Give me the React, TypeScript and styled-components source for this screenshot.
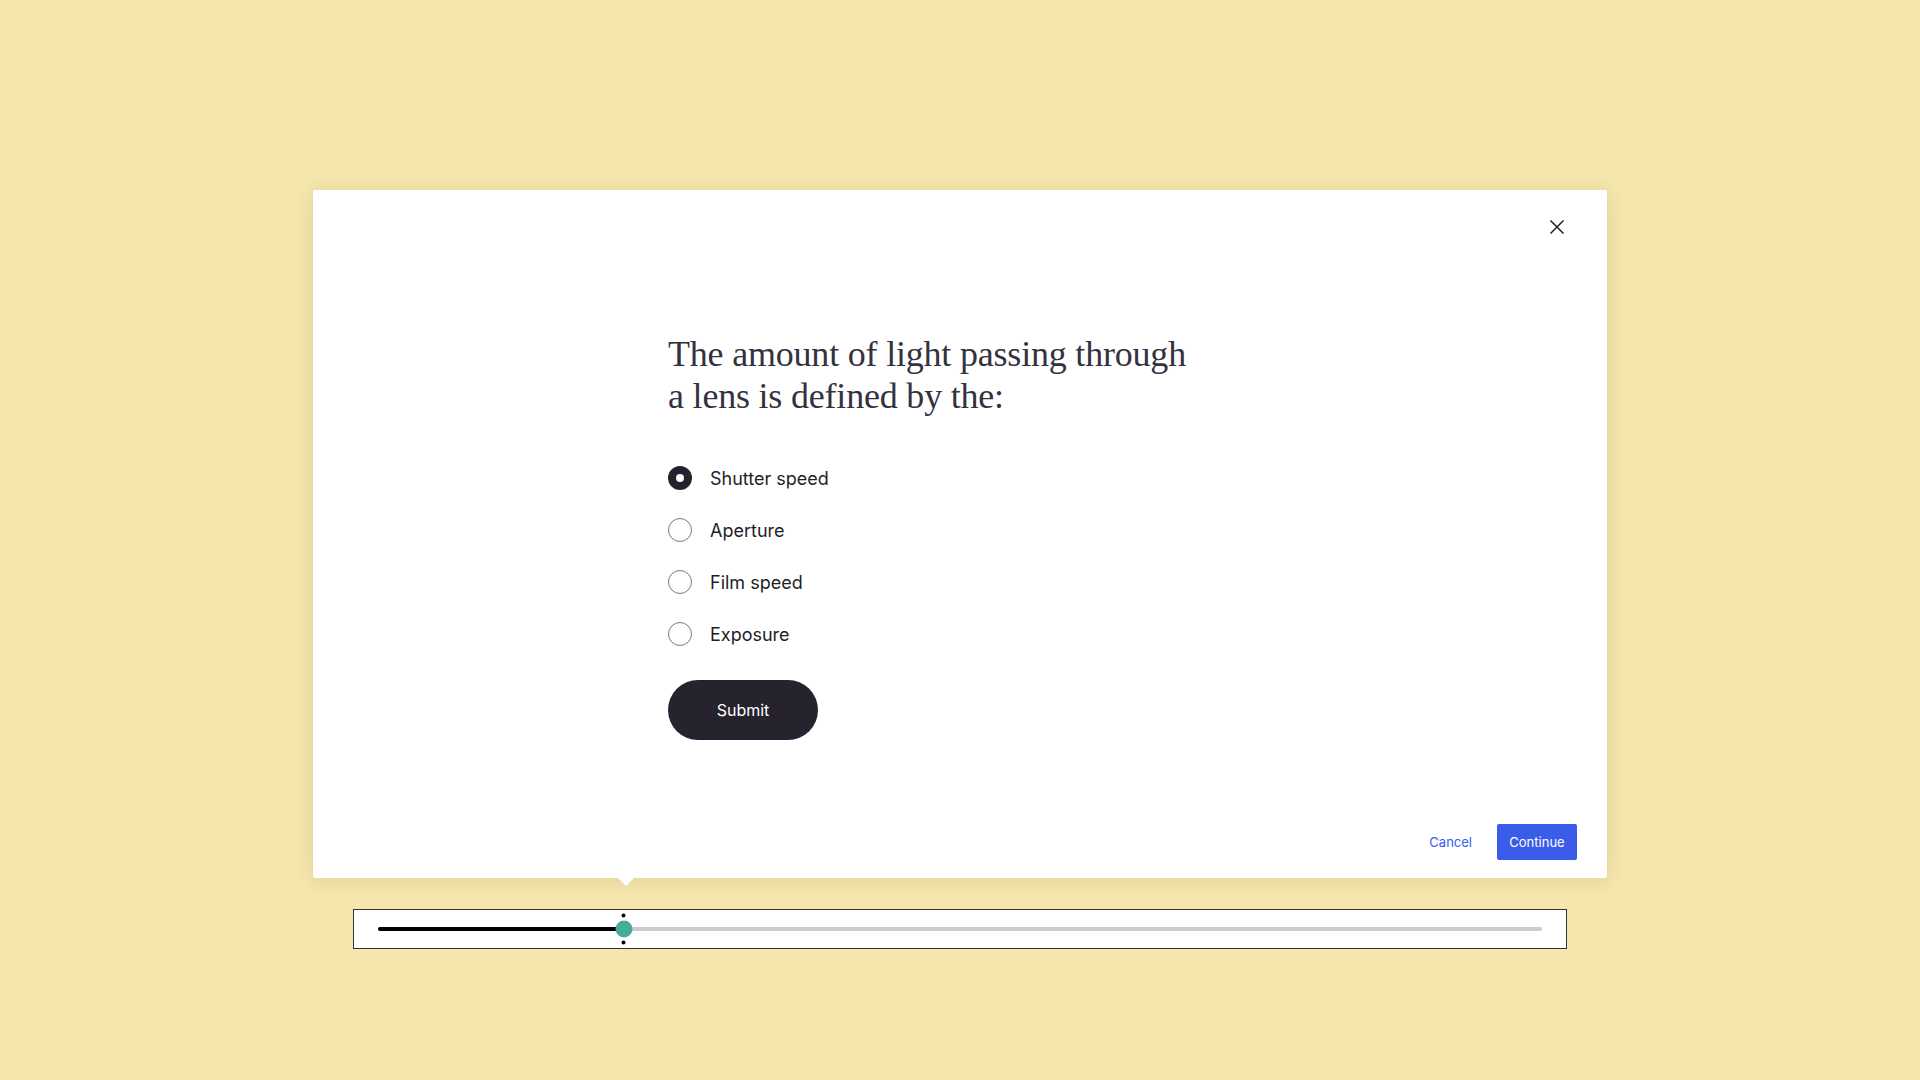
import styled, { createGlobalStyle } from "styled-components";

const GlobalStyle = createGlobalStyle`
  html, body {
    margin: 0;
    padding: 0;
    background: #f5e6ae;
  }
  body {
    font-family: Inter, "Noto Sans", sans-serif;
    color: #221f2c;
  }
`;

const options = ["Shutter speed", "Aperture", "Film speed", "Exposure"];
const progress = 0.211;

export default function App() {
  return (
    <>
      <GlobalStyle />
      <Page>
        <Modal>
          <CloseButton aria-label="Close">
            <svg width="16" height="16" viewBox="0 0 16 16" fill="none">
              <path d="M1.5 1.5L14.5 14.5M14.5 1.5L1.5 14.5" stroke="#222" strokeWidth="1.5" />
            </svg>
          </CloseButton>
          <Body>
            <Question>The amount of light passing through a lens is defined by the:</Question>
            <Options>
              {options.map((label, i) => (
                <Option key={label}>
                  <Radio $checked={i === 0} />
                  <span>{label}</span>
                </Option>
              ))}
            </Options>
            <SubmitButton>Submit</SubmitButton>
          </Body>
          <Footer>
            <LinkButton>Cancel</LinkButton>
            <PrimaryButton>Continue</PrimaryButton>
          </Footer>
        </Modal>
        <Scrubber>
          <Track>
            <Fill style={{ width: `${progress * 100}%` }} />
            <Thumb style={{ left: `${progress * 100}%` }} />
          </Track>
        </Scrubber>
      </Page>
    </>
  );
}

const Page = styled.main`
  min-height: 100vh;
  box-sizing: border-box;
  padding-top: 190px;
  display: flex;
  flex-direction: column;
  align-items: center;
`;

const Modal = styled.section`
  position: relative;
  width: 1294px;
  height: 688px;
  box-sizing: border-box;
  background: #fff;
  border-radius: 2px;
  box-shadow: 0 2px 18px rgba(90, 70, 20, 0.14);
  display: flex;
  flex-direction: column;

  /* pointer down to the scrubber position */
  &::after {
    content: "";
    position: absolute;
    left: 305px;
    bottom: -8px;
    border-left: 8px solid transparent;
    border-right: 8px solid transparent;
    border-top: 8px solid #fff;
  }
`;

const CloseButton = styled.button`
  position: absolute;
  top: 29px;
  right: 42px;
  width: 16px;
  height: 16px;
  padding: 0;
  border: none;
  background: none;
  cursor: pointer;
  display: flex;
`;

const Body = styled.div`
  padding: 143px 0 0 355px;
  display: flex;
  flex-direction: column;
  align-items: flex-start;
`;

const Question = styled.h2`
  margin: 0;
  max-width: 535px;
  font-family: "Liberation Serif", "DejaVu Serif", serif;
  font-weight: 400;
  font-size: 36px;
  line-height: 42px;
  letter-spacing: -0.2px;
  color: #35323f;
`;

const Options = styled.div`
  margin-top: 49px;
  display: flex;
  flex-direction: column;
  gap: 28px;
`;

const Option = styled.label`
  display: flex;
  align-items: center;
  gap: 18px;
  height: 24px;
  font-size: 18px;
  color: #1f1d2a;
  cursor: pointer;
`;

const Radio = styled.span<{ $checked?: boolean }>`
  width: 24px;
  height: 24px;
  box-sizing: border-box;
  border-radius: 50%;
  flex-shrink: 0;
  border: ${({ $checked }) => ($checked ? "8px solid #25222f" : "1.5px solid #7a7a7a")};
  background: #fff;
`;

const SubmitButton = styled.button`
  margin-top: 34px;
  width: 150px;
  height: 60px;
  border: none;
  border-radius: 30px;
  background: #26232f;
  color: #fff;
  font-family: Inter, sans-serif;
  font-size: 16px;
  cursor: pointer;
`;

const Footer = styled.footer`
  margin-top: auto;
  padding: 0 30px 18px;
  display: flex;
  justify-content: flex-end;
  align-items: center;
  gap: 25px;
`;

const LinkButton = styled.button`
  padding: 0;
  border: none;
  background: none;
  color: #3b5be9;
  font-family: Inter, sans-serif;
  font-size: 13px;
  cursor: pointer;
`;

const PrimaryButton = styled.button`
  width: 80px;
  height: 36px;
  border: none;
  border-radius: 2px;
  background: #3b5be9;
  color: #fff;
  font-family: Inter, sans-serif;
  font-size: 13px;
  cursor: pointer;
`;

const Scrubber = styled.div`
  margin-top: 31px;
  width: 1214px;
  height: 40px;
  box-sizing: border-box;
  border: 1.5px solid #333;
  background: #fff;
  padding: 0 24px;
  display: flex;
  align-items: center;
`;

const Track = styled.div`
  position: relative;
  flex: 1;
  height: 4px;
  border-radius: 2px;
  background: #cccccc;
`;

const Fill = styled.div`
  height: 100%;
  border-radius: 2px;
  background: #000;
`;

const Thumb = styled.div`
  position: absolute;
  top: 50%;
  width: 17px;
  height: 17px;
  border-radius: 50%;
  background: #46ae96;
  transform: translate(-50%, -50%);

  &::before,
  &::after {
    content: "";
    position: absolute;
    left: 50%;
    width: 4px;
    height: 4px;
    margin-left: -2px;
    border-radius: 50%;
    background: #000;
  }
  &::before {
    top: -7px;
  }
  &::after {
    bottom: -7px;
  }
`;
